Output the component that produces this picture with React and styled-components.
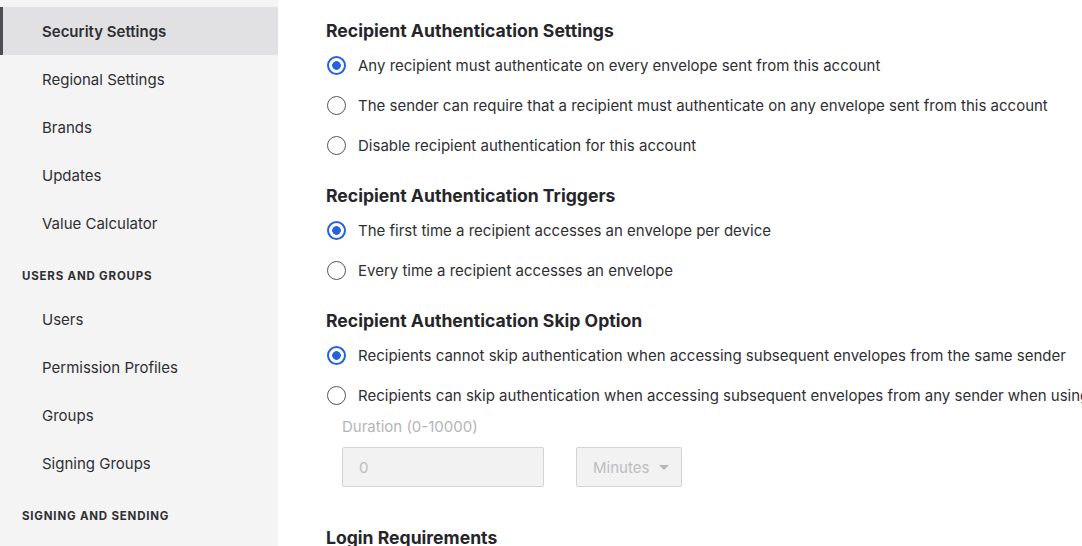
import React from "react";
import styled, { createGlobalStyle } from "styled-components";

const Global = createGlobalStyle`
  html, body { margin: 0; padding: 0; background: #ffffff; }
  body { font-family: Inter, "Noto Sans", sans-serif; color: #2f2f33; overflow: hidden; }
  * { box-sizing: border-box; }
`;

const Page = styled.div`
  display: flex;
  width: 1082px;
  height: 546px;
  overflow: hidden;
`;

const Sidebar = styled.nav`
  width: 278px;
  flex: none;
  background: #f4f4f4;
  padding-top: 7px;
  display: flex;
  flex-direction: column;
`;

const NavItem = styled.div`
  height: 48px;
  display: flex;
  align-items: center;
  padding-left: ${(p) => (p.$active ? "39px" : "42px")};
  font-size: 15px;
  color: #2f2f33;
  font-weight: ${(p) => (p.$active ? 600 : 400)};
  background: ${(p) => (p.$active ? "#e1e1e3" : "transparent")};
  border-left: ${(p) => (p.$active ? "3px solid #4d4d53" : "none")};
`;

const NavHeader = styled.div`
  height: 48px;
  padding: 22px 0 0 22px;
  font-size: 11.5px;
  line-height: 14px;
  font-weight: 700;
  letter-spacing: 0.8px;
  text-transform: uppercase;
  color: #2f2f33;
`;

const Main = styled.main`
  flex: 1;
  padding: 19px 0 0 48px;
  white-space: nowrap;
  overflow: hidden;
`;

const Heading = styled.h2`
  margin: ${(p) => (p.$first ? "0" : "19px")} 0 2px 0;
  height: 24px;
  line-height: 24px;
  font-size: 17.6px;
  font-weight: 700;
  color: #26262a;
`;

const Row = styled.label`
  height: 40px;
  display: flex;
  align-items: center;
  gap: 12px;
  font-size: 15px;
  color: #2f2f33;
`;

const Radio = styled.span`
  width: 20px;
  height: 20px;
  flex: none;
  display: flex;
  align-items: center;
  justify-content: center;
  &::before {
    content: "";
    width: 19px;
    height: 19px;
    border-radius: 50%;
    box-sizing: border-box;
    border: ${(p) => (p.$checked ? "2px solid #2563dc" : "1.8px solid #55555b")};
    background: ${(p) =>
      p.$checked
        ? "radial-gradient(circle, #2563dc 0 4px, #fff 4.6px)"
        : "#fff"};
  }
`;

const SubBlock = styled.div`
  padding-left: 16px;
  margin-top: 2px;
`;

const FieldLabel = styled.div`
  height: 20px;
  line-height: 20px;
  font-size: 15px;
  color: #b4b4b8;
`;

const Fields = styled.div`
  display: flex;
  gap: 32px;
  margin-top: 10px;
`;

const Input = styled.div`
  width: 202px;
  height: 40px;
  background: #f2f2f2;
  border: 1px solid #d4d4d6;
  border-radius: 2px;
  display: flex;
  align-items: center;
  padding-left: 16px;
  font-size: 15px;
  color: #bdbdc0;
`;

const Select = styled(Input)`
  width: 106px;
  gap: 10px;
  padding-left: 16px;
  &::after {
    content: "";
    border-left: 5px solid transparent;
    border-right: 5px solid transparent;
    border-top: 5px solid #b8b8bb;
  }
`;

const LastHeading = styled(Heading)`
  margin-top: 39px;
`;

const nav = [
  { t: "Security Settings", active: true },
  { t: "Regional Settings" },
  { t: "Brands" },
  { t: "Updates" },
  { t: "Value Calculator" },
  { h: "Users and Groups" },
  { t: "Users" },
  { t: "Permission Profiles" },
  { t: "Groups" },
  { t: "Signing Groups" },
  { h: "Signing and Sending" },
];

export default function App() {
  return (
    <>
      <Global />
      <Page>
        <Sidebar>
          {nav.map((n, i) =>
            n.h ? (
              <NavHeader key={i}>{n.h}</NavHeader>
            ) : (
              <NavItem key={i} $active={n.active}>
                {n.t}
              </NavItem>
            )
          )}
        </Sidebar>
        <Main>
          <Heading $first>Recipient Authentication Settings</Heading>
          <Row><Radio $checked />Any recipient must authenticate on every envelope sent from this account</Row>
          <Row><Radio />The sender can require that a recipient must authenticate on any envelope sent from this account</Row>
          <Row><Radio />Disable recipient authentication for this account</Row>

          <Heading>Recipient Authentication Triggers</Heading>
          <Row><Radio $checked />The first time a recipient accesses an envelope per device</Row>
          <Row><Radio />Every time a recipient accesses an envelope</Row>

          <Heading>Recipient Authentication Skip Option</Heading>
          <Row><Radio $checked />Recipients cannot skip authentication when accessing subsequent envelopes from the same sender</Row>
          <Row><Radio />Recipients can skip authentication when accessing subsequent envelopes from any sender when using the same device</Row>
          <SubBlock>
            <FieldLabel>Duration (0-10000)</FieldLabel>
            <Fields>
              <Input>0</Input>
              <Select>Minutes</Select>
            </Fields>
          </SubBlock>

          <LastHeading>Login Requirements</LastHeading>
        </Main>
      </Page>
    </>
  );
}
